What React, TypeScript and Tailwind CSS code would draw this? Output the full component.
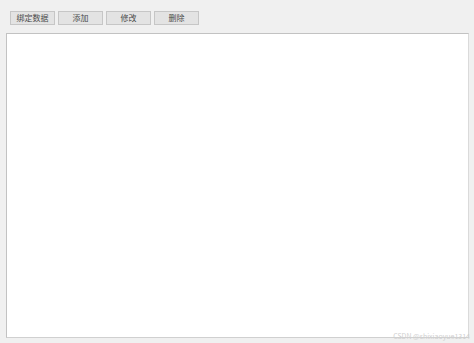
const buttons = ["绑定数据", "添加", "修改", "删除"];

export default function App() {
  return (
    <div
      className="w-[474px] h-[343px] bg-[#f0f0f0] relative overflow-hidden"
      style={{ fontFamily: '"Noto Sans CJK SC", "Noto Sans", sans-serif' }}
    >
      {/* toolbar */}
      <div className="flex gap-[3px] pl-[10px] pt-[11px] h-[33px]">
        {buttons.map((b) => (
          <button
            key={b}
            className="w-[45px] h-[14px] border border-[#c6c6c6] bg-[#e3e3e3] text-[8px] leading-none text-[#4a4a4a] flex items-center justify-center"
          >
            {b}
          </button>
        ))}
      </div>

      {/* grid area */}
      <div className="ml-[6px] w-[463px] h-[305px] bg-white border border-[#c2c2c2] border-r-[#dadada] border-b-[#d0d0d0]" />

      <span className="absolute right-[4px] bottom-[3px] text-[7px] leading-none text-[#cfcfcf]">
        CSDN @shixiaoyue1314
      </span>
    </div>
  );
}
